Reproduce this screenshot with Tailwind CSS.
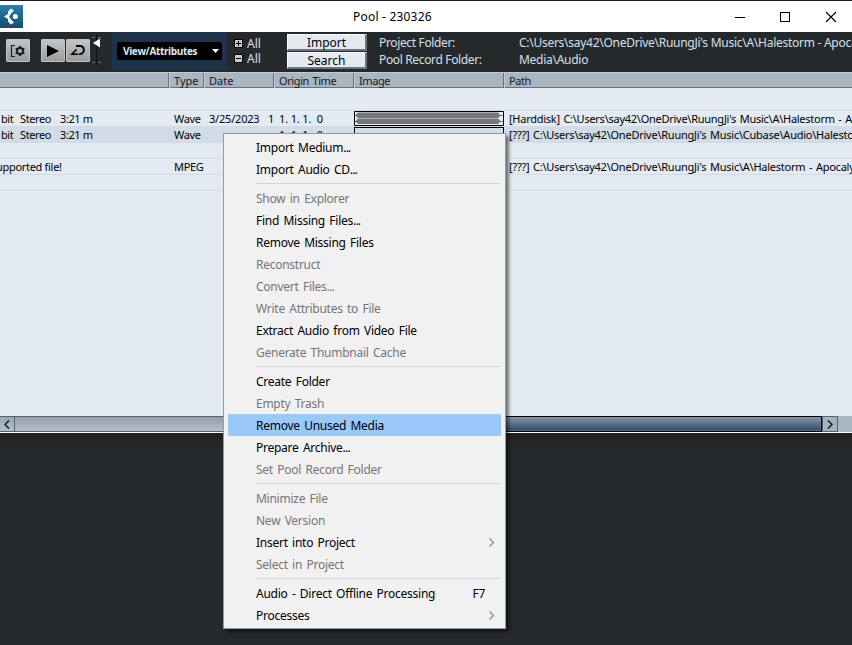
<!DOCTYPE html>
<html lang="en">
    <head>
        <meta charset="utf-8">
        <title>Pool - 230326</title>
        <meta name="viewport" content="width=device-width, initial-scale=1">
        <script src="https://cdn.jsdelivr.net/npm/@tailwindcss/browser@4"></script>
    </head>
    <body class="w-[852px] h-[645px] overflow-hidden bg-[#25292b] font-['Noto_Sans','Open_Sans',sans-serif] text-[11px] text-black">
        <div class="relative w-[852px] h-[645px] overflow-hidden flex flex-col whitespace-nowrap">
            <div class="h-px shrink-0 bg-[#1d1b22]"></div>

            <!-- title bar -->
            <div class="h-[31px] shrink-0 bg-white flex items-center">
                <svg class="w-[23px] h-[23px]" viewBox="0 0 23 23">
                    <defs><linearGradient id="logo" x1="0" y1="0" x2="0" y2="1"><stop offset="0" stop-color="#2382b0"/><stop offset="1" stop-color="#174a6e"/></linearGradient></defs>
                    <rect width="23" height="23" fill="url(#logo)"/>
                    <path d="M11 3.500l3 2-2.500 2.500-2.500 3.500 2.500 3.500L14 17.500l-3 2-3-3v-2.500L4 11.500 8 9V6.500z" fill="#fff"/>
                    <circle cx="15.300" cy="11.500" r="2.500" fill="#fff"/>
                </svg>
                <h1 class="w-[740px] pl-[330px] text-[12px] tracking-[0.2px]">Pool - 230326</h1>
                <svg class="-ml-[28px] w-[102px] h-[12px]" viewBox="0 0 102 12" fill="none" stroke="#000" shape-rendering="crispEdges">
                    <path d="M0 6.500h10M45.500 1.500h9v9h-9z"/>
                    <path d="M91 1l10 10M101 1L91 11" shape-rendering="auto" stroke-width="1.100"/>
                </svg>
            </div>

            <!-- toolbar -->
            <div class="h-10 shrink-0 bg-[#25292b] text-[#d3e0ee] flex">
                <div class="flex pt-[7px] pl-[6px]">
                    <div class="w-6 h-[23px] rounded-[1px] bg-linear-to-b from-[#c3c6c8] to-[#999c9e] border border-[#c2c4c5] flex items-center justify-center">
                        <svg class="w-4 h-4" viewBox="0 0 16 16" fill="none" stroke="#191d20">
                            <path d="M5 2.500H1.500v11H5" stroke-width="1.200"/>
                            <circle cx="10" cy="8" r="3" stroke-width="2"/>
                            <path d="M10 3v1.500M10 11.500V13M5.700 5.500l1.300.8M13 9.700l1.300.8M5.700 10.500l1.300-.8M13 6.300l1.300-.8" stroke-width="2"/>
                        </svg>
                    </div>
                    <div class="ml-[11px] w-6 h-[23px] rounded-[1px] bg-linear-to-b from-[#c3c6c8] to-[#999c9e] border border-[#c2c4c5] flex items-center justify-center">
                        <svg class="w-3 h-3" viewBox="0 0 12 12"><path d="M0 0l12 6-12 6z" fill="#000"/></svg>
                    </div>
                    <div class="ml-px w-6 h-[23px] rounded-[1px] bg-linear-to-b from-[#c3c6c8] to-[#999c9e] border border-[#c2c4c5] flex items-center justify-center">
                        <svg class="w-4 h-[13px]" viewBox="0 0 16 13" fill="none" stroke="#000" stroke-width="1.800"><path d="M6 2h4.500a4 4 0 0 1 1 7.600L9 10.500"/><path d="M6.500 5.500L1.800 10.300H8" stroke-width="1.600"/></svg>
                    </div>
                </div>
                <svg class="w-3 h-10 ml-px" viewBox="0 0 12 40" shape-rendering="crispEdges">
                    <path d="M5.500 3v30" stroke="#0b1014"/>
                    <path d="M1 5.500h3M7 5.500h3M1 30.500h3M7 30.500h3" stroke="#686d70"/>
                    <path d="M9 6.500v9L2 11z" fill="#fff" shape-rendering="auto"/>
                </svg>
                <div class="ml-[9px] w-[115px] h-[38px] bg-[#1e3349] flex items-center justify-center">
                    <div class="w-[105px] h-[18px] rounded-[2px] bg-black flex items-center justify-between pl-[6px] pr-[3px] text-[10px] font-bold text-[#dce9f6] font-['Open_Sans','Noto_Sans',sans-serif]">
                        <span class="tracking-[-0.35px]">View/Attributes</span>
                        <svg class="w-[7px] h-1" viewBox="0 0 7 4"><path d="M0 0h7L3.500 4z" fill="#fff"/></svg>
                    </div>
                </div>
                <div class="ml-[7px] pt-1 w-[53px] text-[12px]">
                    <div class="h-[15px] flex items-center gap-1">
                        <svg class="w-[9px] h-[9px]" viewBox="0 0 9 9" shape-rendering="crispEdges"><path d="M.5.5h8v8h-8z" fill="#c9c9c9" stroke="#000"/><path d="M2 4.500h5M4.500 2v5" stroke="#000"/></svg>
                        <span>All</span>
                    </div>
                    <div class="h-[15px] flex items-center gap-1">
                        <svg class="w-[9px] h-[9px]" viewBox="0 0 9 9" shape-rendering="crispEdges"><path d="M.5.5h8v8h-8z" fill="#c9c9c9" stroke="#000"/><path d="M2 4.500h5" stroke="#000"/></svg>
                        <span>All</span>
                    </div>
                </div>
                <div class="pt-[2px] w-20 text-[12px] text-black text-center flex flex-col gap-px">
                    <div class="h-[17px] leading-[16px] bg-[#e3eaf2] border-t border-l border-t-white border-l-white border-r-2 border-b-2 border-r-[#6b7580] border-b-[#6b7580]">Import</div>
                    <div class="h-[17px] leading-[16px] bg-[#e3eaf2] border-t border-l border-t-white border-l-white border-r-2 border-b-2 border-r-[#6b7580] border-b-[#6b7580]">Search</div>
                </div>
                <div class="ml-3 pt-[2px] w-[140px] text-[12px] leading-[17px] tracking-[-0.35px]">
                    <div>Project Folder:</div>
                    <div>Pool Record Folder:</div>
                </div>
                <div class="pt-[2px] w-[333px] shrink-0 overflow-hidden text-[12px] leading-[17px] tracking-[-0.27px]">
                    <div>C:\Users\say42\OneDrive\RuungJi's Music\A\Halestorm - Apocalyptic</div>
                    <div>Media\Audio</div>
                </div>
            </div>

            <!-- column headers -->
            <div class="h-4 shrink-0 grid grid-cols-[169px_35px_70px_80px_150px_1fr] leading-[16px] text-[#14191f] bg-[#a9b5c1] border-t border-t-[#c1cbd3] border-b border-b-[#667380]">
                <div class="border-r border-[#667380]"></div>
                <div class="pl-1 border-l border-l-[#c1cbd3] border-r border-r-[#667380]">Type</div>
                <div class="pl-1 border-l border-l-[#c1cbd3] border-r border-r-[#667380]">Date</div>
                <div class="pl-1 border-l border-l-[#c1cbd3] border-r border-r-[#667380] tracking-[-0.4px] [word-spacing:1px]">Origin Time</div>
                <div class="pl-1 border-l border-l-[#c1cbd3] border-r border-r-[#667380] tracking-[-0.4px]">Image</div>
                <div class="pl-1 border-l border-l-[#c1cbd3] tracking-[-0.4px]">Path</div>
            </div>

            <!-- pool rows -->
            <div class="h-[328px] shrink-0 bg-[#e3eaf2] leading-[16px]">
                <div class="h-[23px] border-b border-[#d2dce6]"></div>
                <div class="h-[15px] grid grid-cols-[174px_35px_70px_75px_155px_343px]">
                    <div class="flex tracking-[-0.4px]"><span class="w-[20px] pl-px">bit</span><span class="w-10">Stereo</span><span>3:21 m</span></div>
                    <div class="tracking-[-0.3px]">Wave</div>
                    <div class="flex"><span class="w-[59px] tracking-[-0.2px]">3/25/2023</span><span>1</span></div>
                    <div class="tracking-[-0.15px]">1. 1. 1.&nbsp; 0</div>
                    <svg class="w-[150px] h-[15px]" viewBox="0 0 150 15">
                        <path d="M.5.5h149v14H.5z" fill="#e3eaf2" stroke="#000"/>
                        <path d="M1 4.500h148M1 10.500h148" stroke="#777"/>
                        <path d="M4 1.500h140l2 2v1.500l-2 2H4l-2-2V3.500zM4 7.500h140l2 2v1.500l-2 2H4l-2-2V9.500z" fill="#777"/>
                    </svg>
                    <div class="overflow-hidden tracking-[-0.26px] [word-spacing:1px]">[Harddisk] C:\Users\say42\OneDrive\RuungJi's Music\A\Halestorm - Apocalyptic</div>
                </div>
                <div class="h-[17px] leading-[18px] bg-[#d2dce6] grid grid-cols-[174px_35px_70px_75px_155px_343px]">
                    <div class="flex tracking-[-0.4px]"><span class="w-[20px] pl-px">bit</span><span class="w-10">Stereo</span><span>3:21 m</span></div>
                    <div class="tracking-[-0.3px]">Wave</div>
                    <div></div>
                    <div class="tracking-[-0.15px]">1. 1. 1.&nbsp; 0</div>
                    <div class="mt-px w-[150px] h-[15px] border border-black"></div>
                    <div class="overflow-hidden tracking-[-0.24px] [word-spacing:1px]">[???] C:\Users\say42\OneDrive\RuungJi's Music\Cubase\Audio\Halestorm - Apocalyptic</div>
                </div>
                <div class="h-4 border-b border-[#d2dce6]"></div>
                <div class="h-4 border-b border-[#d2dce6] grid grid-cols-[174px_335px_343px]">
                    <div class="overflow-hidden flex tracking-[-0.3px]"><span class="-ml-[9px]">supported file!</span></div>
                    <div class="tracking-[-0.3px]">MPEG</div>
                    <div class="overflow-hidden tracking-[-0.24px] [word-spacing:1px]">[???] C:\Users\say42\OneDrive\RuungJi's Music\A\Halestorm - Apocalyptic</div>
                </div>
                <div class="h-4 border-b border-[#d2dce6]"></div>
            </div>

            <!-- horizontal scrollbar -->
            <div class="h-4 shrink-0 flex bg-[#a9b5c1]">
                <div class="w-[15px] border-y border-r border-[#56636f] flex items-center justify-center bg-linear-to-b from-[#9ba8b3] to-[#b2bdc7]">
                    <svg class="w-[6px] h-[9px]" viewBox="0 0 6 9" fill="none" stroke="#0b1925" stroke-width="1.500"><path d="M5 .5l-4 4 4 4"/></svg>
                </div>
                <div class="w-[285px] border-y border-[#56636f] bg-linear-to-b from-[#929fa9] to-[#b3bec9]"></div>
                <div class="w-[522px] border border-black bg-linear-to-b from-[#8194a7] via-[#5a7088] to-[#334963] shadow-[inset_0_0_0_1px_#7f93a966]"></div>
                <div class="w-4 border border-[#56636f] flex items-center justify-center bg-[#a5b1bd]">
                    <svg class="w-[6px] h-[9px]" viewBox="0 0 6 9" fill="none" stroke="#0b1925" stroke-width="1.500"><path d="M1 .5l4 4-4 4"/></svg>
                </div>
            </div>
            <div class="h-px shrink-0 bg-white"></div>
            <div class="h-3 shrink-0 bg-linear-to-b from-[#1d2022] to-[#25292b]"></div>

            <!-- context menu -->
            <div class="absolute left-[223px] top-[133px] w-[283px] h-[496px] bg-[#f1f1f1] border border-[#9b9b9b] pt-[2px] pl-1 pr-1 text-[12px] leading-[24px] tracking-[-0.26px] [word-spacing:1.500px] shadow-[3px_3px_3px_rgba(0,0,0,0.5)]">
                <div class="h-[22px] pl-7">Import Medium<span class="tracking-[-0.8px]">...</span></div>
                <div class="h-[22px] pl-7">Import Audio CD<span class="tracking-[-0.8px]">...</span></div>
                <div class="h-px my-[3px] ml-7 mr-px bg-[#d2d2d2]"></div>
                <div class="h-[22px] pl-7 text-[#757575]">Show in Explorer</div>
                <div class="h-[22px] pl-7">Find Missing Files<span class="tracking-[-0.8px]">...</span></div>
                <div class="h-[22px] pl-7">Remove Missing Files</div>
                <div class="h-[22px] pl-7 text-[#757575]">Reconstruct</div>
                <div class="h-[22px] pl-7 text-[#757575]">Convert Files<span class="tracking-[-0.8px]">...</span></div>
                <div class="h-[22px] pl-7 text-[#757575]">Write Attributes to File</div>
                <div class="h-[22px] pl-7">Extract Audio from Video File</div>
                <div class="h-[22px] pl-7 text-[#757575]">Generate Thumbnail Cache</div>
                <div class="h-px my-[3px] ml-7 mr-px bg-[#d2d2d2]"></div>
                <div class="h-[22px] pl-7">Create Folder</div>
                <div class="h-[22px] pl-7 text-[#757575]">Empty Trash</div>
                <div class="h-[22px] pl-7 bg-[#99c9f9]">Remove Unused Media</div>
                <div class="h-[22px] pl-7">Prepare Archive<span class="tracking-[-0.8px]">...</span></div>
                <div class="h-[22px] pl-7 text-[#757575]">Set Pool Record Folder</div>
                <div class="h-px my-[3px] ml-7 mr-px bg-[#d2d2d2]"></div>
                <div class="h-[22px] pl-7 text-[#757575]">Minimize File</div>
                <div class="h-[22px] pl-7 text-[#757575]">New Version</div>
                <div class="h-[22px] pl-7 pr-[7px] flex justify-between"><span>Insert into Project</span><svg class="mt-[7px] w-[5px] h-[9px]" viewBox="0 0 5 9" fill="none" stroke="#858585" stroke-width="1.200"><path d="M.5.500l4 4-4 4"/></svg></div>
                <div class="h-[22px] pl-7 text-[#757575]">Select in Project</div>
                <div class="h-px my-[3px] ml-7 mr-px bg-[#d2d2d2]"></div>
                <div class="h-[22px] pl-7 pr-4 flex justify-between"><span>Audio - Direct Offline Processing</span><span>F7</span></div>
                <div class="h-[22px] pl-7 pr-[7px] flex justify-between"><span>Processes</span><svg class="mt-[7px] w-[5px] h-[9px]" viewBox="0 0 5 9" fill="none" stroke="#858585" stroke-width="1.200"><path d="M.5.500l4 4-4 4"/></svg></div>
            </div>
        </div>
    </body>
</html>
